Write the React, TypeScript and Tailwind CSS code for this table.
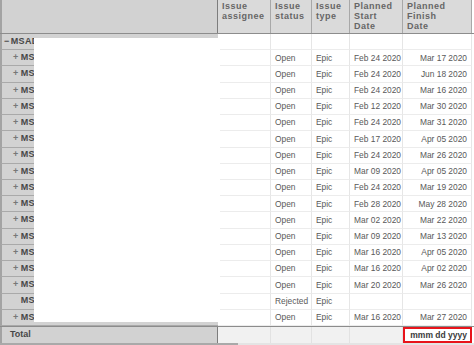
const rows = [
  { s: "Open", t: "Epic", a: "Feb 24 2020", b: "Mar 17 2020" },
  { s: "Open", t: "Epic", a: "Feb 24 2020", b: "Jun 18 2020" },
  { s: "Open", t: "Epic", a: "Feb 24 2020", b: "Mar 16 2020" },
  { s: "Open", t: "Epic", a: "Feb 12 2020", b: "Mar 30 2020" },
  { s: "Open", t: "Epic", a: "Feb 24 2020", b: "Mar 31 2020" },
  { s: "Open", t: "Epic", a: "Feb 17 2020", b: "Apr 05 2020" },
  { s: "Open", t: "Epic", a: "Feb 24 2020", b: "Mar 26 2020" },
  { s: "Open", t: "Epic", a: "Mar 09 2020", b: "Apr 05 2020" },
  { s: "Open", t: "Epic", a: "Feb 24 2020", b: "Mar 19 2020" },
  { s: "Open", t: "Epic", a: "Feb 28 2020", b: "May 28 2020" },
  { s: "Open", t: "Epic", a: "Mar 02 2020", b: "Mar 22 2020" },
  { s: "Open", t: "Epic", a: "Mar 09 2020", b: "Mar 13 2020" },
  { s: "Open", t: "Epic", a: "Mar 16 2020", b: "Apr 05 2020" },
  { s: "Open", t: "Epic", a: "Mar 16 2020", b: "Apr 02 2020" },
  { s: "Open", t: "Epic", a: "Mar 20 2020", b: "Mar 26 2020" },
  { s: "Rejected", t: "Epic", a: "", b: "", noPlus: true },
  { s: "Open", t: "Epic", a: "Mar 16 2020", b: "Mar 27 2020" },
]

const headers = [
  { w: "w-[53px]", lines: ["Issue", "assignee"] },
  { w: "w-[41px]", lines: ["Issue", "status"] },
  { w: "w-[38px]", lines: ["Issue", "type"] },
  { w: "w-[53px]", lines: ["Planned", "Start", "Date"] },
  { w: "w-[69px]", lines: ["Planned", "Finish", "Date"] },
]

function LeftCell({ children }: { children: React.ReactNode }) {
  return (
    <div className="w-[218px] shrink-0 bg-[#d2d2d2] border-l-2 border-l-[#a3a3a3] border-b border-b-[#a9a9a9] flex items-center text-[9px] font-bold text-[#474747] tracking-[0.4px] overflow-hidden whitespace-nowrap">
      {children}
    </div>
  )
}

function DataCell({ w, children, right }: { w: string; children?: React.ReactNode; right?: boolean }) {
  return (
    <div
      className={`${w} shrink-0 border-r border-r-[#e6e6e6] border-b border-b-[#ececec] flex items-center px-[4px] text-[8.4px] text-[#595959] whitespace-nowrap ${right ? "justify-end" : ""}`}
    >
      {children}
    </div>
  )
}

function Row({ children }: { children: React.ReactNode }) {
  return <div className="flex min-h-0">{children}</div>
}

export default function App() {
  return (
    <div className="relative w-[474px] h-[345px] overflow-hidden bg-white font-['Liberation_Sans',Arial,sans-serif]">
      {/* header */}
      <div className="flex h-[34px] border-b border-b-[#8c8c8c]">
        <div className="w-[218px] shrink-0 bg-[#d2d2d2] border-l-2 border-l-[#a3a3a3] border-r border-r-[#7d7d7d]" />
        {headers.map((h, i) => (
          <div
            key={i}
            className={`${h.w} shrink-0 bg-[#dadada] border-r border-r-[#a8a8a8] px-[4px] pt-[1px] text-[9px] leading-[10px] font-bold text-[#666] tracking-[0.5px]`}
          >
            {h.lines.map((l) => (
              <div key={l}>{l}</div>
            ))}
          </div>
        ))}
      </div>

      <div className="grid grid-rows-[repeat(18,minmax(0,1fr))] h-[292px]">
        <Row>
          <LeftCell>
            <span className="ml-[2px] mr-[1px]">−</span>MSAD
          </LeftCell>
          <DataCell w="w-[53px]" />
          <DataCell w="w-[41px]" />
          <DataCell w="w-[38px]" />
          <DataCell w="w-[53px]" />
          <DataCell w="w-[69px]" />
        </Row>

        {rows.map((r, i) => (
          <Row key={i}>
            <LeftCell>
              <span className={`ml-[11px] mr-[2px] text-[#777] ${r.noPlus ? "invisible" : ""}`}>+</span>MSAD
            </LeftCell>
            <DataCell w="w-[53px]" />
            <DataCell w="w-[41px]">{r.s}</DataCell>
            <DataCell w="w-[38px]">{r.t}</DataCell>
            <DataCell w="w-[53px]">{r.a}</DataCell>
            <DataCell w="w-[69px]" right>
              {r.b}
            </DataCell>
          </Row>
        ))}
      </div>

      {/* total */}
      <div className="flex h-[17px] border-t border-t-[#8c8c8c]">
        <div className="w-[218px] shrink-0 bg-[#d2d2d2] border-l-2 border-l-[#a3a3a3] border-r border-r-[#7d7d7d] flex items-center pl-[8px] text-[9px] font-bold text-[#474747]">
          Total
        </div>
        <div className="w-[53px] shrink-0 bg-[#f1f1f1] border-r border-r-[#e2e2e2]" />
        <div className="w-[41px] shrink-0 bg-[#f1f1f1] border-r border-r-[#e2e2e2]" />
        <div className="w-[38px] shrink-0 bg-[#f1f1f1] border-r border-r-[#e2e2e2]" />
        <div className="w-[53px] shrink-0 bg-[#f1f1f1] border-r border-r-[#e2e2e2]" />
        <div className="w-[69px] shrink-0 bg-white border-2 border-[#e8141b] flex items-center justify-end pr-[3px] text-[8.5px] font-bold text-[#3a3a3a]">
          mmm dd yyyy
        </div>
      </div>

      {/* scrollbar */}
      <div className="flex h-[2px]">
        <div className="w-[238px] bg-[#a9a9a9]" />
        <div className="flex-1 bg-[#e4e4e4]" />
      </div>

      {/* redaction */}
      <div className="absolute left-[34px] top-[38px] w-[186px] h-[284px] bg-white" />
    </div>
  )
}
